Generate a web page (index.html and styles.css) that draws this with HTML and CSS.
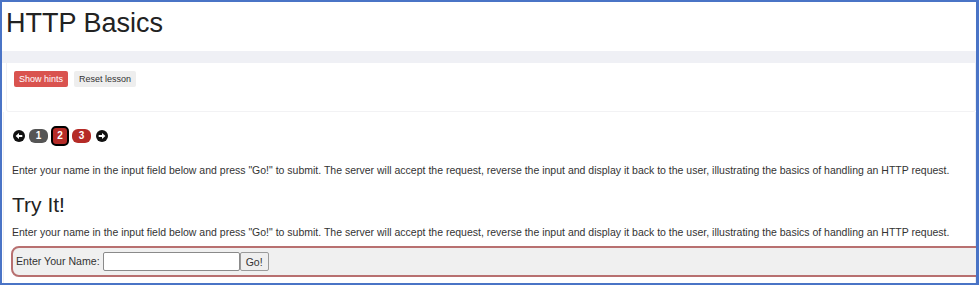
FILE: index.html
```html
<!DOCTYPE html>
<html>
<head>
<meta charset="utf-8">
<link rel="stylesheet" href="styles.css">
</head>
<body>
<div class="frame">
  <header class="header">
    <h1 class="title">HTTP Basics</h1>
  </header>
  <div class="band"></div>
  <div class="card">
    <button class="btn btn-red">Show hints</button>
    <button class="btn btn-gray">Reset lesson</button>
  </div>
  <div class="content">
    <div class="pager">
      <svg class="arrow" viewBox="0 0 12 12" width="12" height="12"><circle cx="6" cy="6" r="6" fill="#111"/><path d="M2.6 6 L6 3 L6 4.9 L9.3 4.9 L9.3 7.1 L6 7.1 L6 9 Z" fill="#fff"/></svg>
      <span class="badge badge-dark">1</span>
      <span class="badge badge-red badge-active">2</span>
      <span class="badge badge-red">3</span>
      <svg class="arrow" viewBox="0 0 12 12" width="12" height="12"><circle cx="6" cy="6" r="6" fill="#111"/><path d="M9.4 6 L6 3 L6 4.9 L2.7 4.9 L2.7 7.1 L6 7.1 L6 9 Z" fill="#fff"/></svg>
    </div>
    <p class="text p1">Enter your name in the input field below and press "Go!" to submit. The server will accept the request, reverse the input and display it back to the user, illustrating the basics of handling an HTTP request.</p>
    <h2 class="subtitle">Try It!</h2>
    <p class="text p2">Enter your name in the input field below and press "Go!" to submit. The server will accept the request, reverse the input and display it back to the user, illustrating the basics of handling an HTTP request.</p>
    <form class="attack-form">
      <label class="label">Enter Your Name:</label><input class="field" type="text"><button class="go" type="button">Go!</button>
    </form>
  </div>
</div>
</body>
</html>
```
FILE: styles.css
```css
* { box-sizing: border-box; }
html, body { margin: 0; padding: 0; background: #fff; }
body { font-family: "Liberation Sans", Arial, sans-serif; color: #333; }

.frame {
  width: 979px;
  height: 285px;
  border: 2px solid #4a74c6;
  border-right-width: 3px;
  overflow: hidden;
  background: #fff;
  display: flex;
  flex-direction: column;
}

.header { height: 49px; padding: 6px 0 0 4px; }
.title { margin: 0; font-size: 27px; font-weight: 400; line-height: 31px; color: #222; }

.band { height: 12px; background: #eff0f5; }

.card {
  height: 49px;
  margin-left: 4px;
  border-left: 1px solid #f0f0f3;
  border-right: 1px solid #eceef3;
  border-bottom: 1px solid #f2f2f4;
  border-radius: 0 0 3px 3px;
  padding: 8px 0 0 7px;
  display: flex;
  align-items: flex-start;
  gap: 6px;
}

.btn {
  height: 16px;
  padding: 0 5px;
  font-family: "Liberation Sans", Arial, sans-serif;
  font-size: 9px;
  line-height: 16px;
  border: none;
  border-radius: 2px;
}
.btn-red { background: #d9534f; color: #fff; }
.btn-gray { background: #eeeeee; color: #333; }

.content {
  flex: 1;
  padding: 13px 0 0 8px;
  border-left: 1px solid #f0f0f3;
  margin-left: 1px;
  border-right: 1px solid #eceef3;
}

.pager { display: flex; align-items: center; height: 21px; margin-left: 1px; gap: 0; }
.arrow { display: block; flex: none; }
.pager .arrow:first-child { margin-right: 4px; }
.pager .arrow:last-child { margin-left: 5px; }
.badge {
  display: inline-flex;
  align-items: center;
  justify-content: center;
  width: 19px;
  height: 14px;
  border-radius: 6px;
  color: #fff;
  font-weight: 700;
  font-size: 10px;
}
.badge-dark { background: #555; margin-right: 3px; }
.badge-red { background: #b52b27; }
.badge-active { width: 18px; height: 20px; border: 2px solid #000; border-radius: 5px; margin-right: 3px; }

.text { margin: 0; font-size: 10.5px; line-height: 14px; color: #333; white-space: nowrap; }
.p1 { margin-top: 17px; }
.subtitle { margin: 16px 0 0; font-size: 21px; font-weight: 400; line-height: 23px; color: #222; }
.p2 { margin-top: 9px; }

.attack-form {
  margin: 7px 0 0 -1px;
  width: 1000px;
  height: 31px;
  border: 2px solid #b87070;
  border-radius: 8px;
  background: #f0f0f0;
  padding: 4px 0 0 3px;
  display: flex;
  align-items: center;
  align-self: flex-start;
}
.label { font-size: 10.6px; color: #333; margin-right: 3px; line-height: 19px; align-self: flex-start; }
.field {
  width: 137px;
  height: 19px;
  border: 1px solid #8a8a8a;
  border-radius: 2px;
  background: #fff;
  padding: 0;
  margin: 0;
  align-self: flex-start;
}
.go {
  width: 29px;
  height: 19px;
  border: 1px solid #9a9a9a;
  border-radius: 2px;
  background: #efefef;
  font-family: "Liberation Sans", Arial, sans-serif;
  font-size: 10.5px;
  color: #333;
  padding: 0;
  margin: 0;
  align-self: flex-start;
}
```
